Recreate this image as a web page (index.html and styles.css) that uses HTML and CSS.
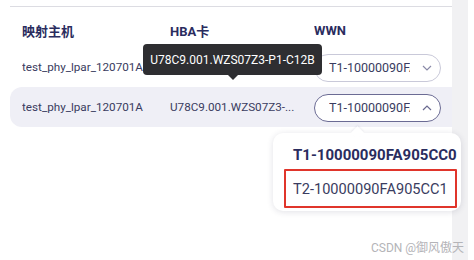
FILE: index.html
```html
<!DOCTYPE html>
<html lang="zh">
<head>
<meta charset="utf-8">
<link rel="stylesheet" href="styles.css">
</head>
<body>
<div class="page">
  <div class="main">
    <div class="row head">
      <div class="cell">映射主机</div>
      <div class="cell">HBA卡</div>
      <div class="cell">WWN</div>
    </div>
    <div class="row">
      <div class="cell">test_phy_lpar_120701A</div>
      <div class="cell">U78C9.001.WZS07Z3-...</div>
      <div class="cell">
        <div class="select">
          <span class="val">T1-10000090FA905CC0</span>
          <svg class="chev" width="10" height="6" viewBox="0 0 10 6"><path d="M1 1l4 4 4-4" fill="none" stroke="#8a8aa8" stroke-width="1.2"/></svg>
        </div>
      </div>
    </div>
    <div class="row active">
      <div class="cell">test_phy_lpar_120701A</div>
      <div class="cell">U78C9.001.WZS07Z3-...</div>
      <div class="cell">
        <div class="select open">
          <span class="val">T1-10000090FA905CC0</span>
          <svg class="chev" width="10" height="6" viewBox="0 0 10 6"><path d="M1 5l4-4 4 4" fill="none" stroke="#6a6a90" stroke-width="1.2"/></svg>
        </div>
      </div>
    </div>
  </div>
  <div class="scroll"></div>
  <div class="tooltip">U78C9.001.WZS07Z3-P1-C12B</div>
  <div class="dropdown">
    <div class="opt sel">T1-10000090FA905CC0</div>
    <div class="opt">T2-10000090FA905CC1</div>
  </div>
  <div class="mark"></div>
  <div class="wm">CSDN @御风傲天</div>
</div>
</body>
</html>
```
FILE: styles.css
```css
html, body { margin: 0; padding: 0; background: #fff; }
body { font-family: Roboto, "Noto Sans CJK SC", sans-serif; }
.page { position: relative; width: 474px; height: 260px; display: flex; overflow: hidden; }
.main { width: 442px; margin-left: 10px; margin-top: 6px; border-top: 1.5px solid #dcdce2; }
.scroll { width: 16px; background: #f1f1f3; }
.row { display: grid; grid-template-columns: 148px 144px 1fr; height: 40px; align-items: center; padding-left: 12px; font-size: 11.7px; color: #3a3c60; }
.row .cell { white-space: nowrap; overflow: hidden; }
.head { margin-top: 4px; height: 36px; padding-top: 3px; box-sizing: border-box; font-weight: 700; font-size: 13px; color: #2a2c5e; }
.active { background: #efeff6; border-radius: 12px 0 0 12px; }
.select { width: 127px; height: 28px; box-sizing: border-box; border: 1px solid #c9c9d9; border-radius: 15px; display: flex; align-items: center; padding-left: 14px; background: #fff; margin-top: 1px; }
.select.open { border-color: #6b6b94; }
.val { width: 81px; overflow: hidden; white-space: nowrap; color: #3a3c60; font-size: 12.5px; }
.chev { margin-left: 12px; }
.tooltip { position: absolute; left: 143px; top: 44px; width: 179px; height: 31px; background: #2e2e31; border-radius: 4px; color: #fff; font-size: 12px; display: flex; align-items: center; justify-content: center; white-space: nowrap; }
.tooltip::after { content: ""; position: absolute; left: 85px; bottom: -5px; border-left: 5px solid transparent; border-right: 5px solid transparent; border-top: 5px solid #2e2e31; }
.dropdown { position: absolute; left: 273px; top: 133px; width: 188px; height: 78px; background: #fff; border-radius: 10px; box-shadow: 0 1px 6px rgba(40,40,80,0.14); padding: 9px 0 0 20px; box-sizing: border-box; }
.dropdown::before { content: ""; position: absolute; left: 80px; top: -5px; width: 9px; height: 9px; background: #fff; transform: rotate(45deg); box-shadow: -1px -1px 2px rgba(40,40,80,0.06); }
.opt { height: 31px; display: flex; align-items: center; font-size: 14.6px; color: #3a3c60; position: relative; white-space: nowrap; }
.opt.sel { font-weight: 700; color: #2a2c5e; font-size: 15px; height: 26px; margin-bottom: 5px; }
.mark { position: absolute; left: 284px; top: 169px; width: 173px; height: 39px; box-sizing: border-box; border: 2px solid #e0352b; border-radius: 1px; }
.wm { position: absolute; left: 371px; top: 238px; font-size: 12px; color: #b4b4b8; white-space: nowrap; }
```
